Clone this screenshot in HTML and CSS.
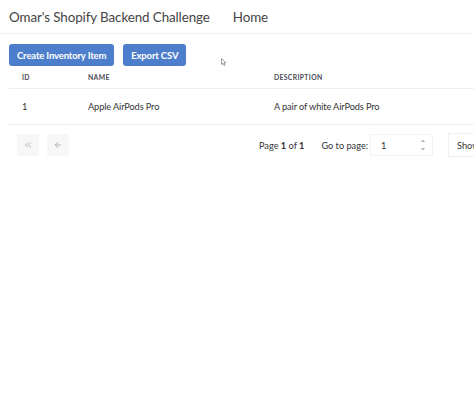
FILE: index.html
```html
<!DOCTYPE html>
<html>
<head>
<meta charset="utf-8">
<link rel="stylesheet" href="styles.css">
</head>
<body>
<header class="topbar">
  <span class="brand">Omar's Shopify Backend Challenge</span>
  <a class="nav-link">Home</a>
</header>
<main class="content">
  <div class="actions">
    <button class="btn">Create Inventory Item</button>
    <button class="btn">Export CSV</button>
    <span class="cursor"><svg width="6" height="8" viewBox="0 0 6 8"><path d="M0.5 0.5 L0.5 6.5 L2 5.2 L3 7.5 L4 7 L3 4.8 L5 4.8 Z" fill="#fff" stroke="#888" stroke-width="0.8"/></svg></span>
  </div>
  <table class="grid">
    <thead>
      <tr><th class="c-id">ID</th><th class="c-name">Name</th><th class="c-desc">Description</th></tr>
    </thead>
    <tbody>
      <tr><td>1</td><td>Apple AirPods Pro</td><td>A pair of white AirPods Pro</td></tr>
    </tbody>
  </table>
  <div class="pager">
    <div class="pager-nav">
      <button class="pbtn" aria-label="First page"><svg width="8" height="8" viewBox="0 0 8 8"><path d="M4 1.5 L1.5 4 L4 6.5 M7 1.5 L4.5 4 L7 6.5" fill="none" stroke="#aaa" stroke-width="0.9"/></svg></button>
      <button class="pbtn" aria-label="Previous page"><svg width="8" height="8" viewBox="0 0 8 8"><path d="M4 1.2 L1.2 4 L4 6.8 M1.2 4 H7" fill="none" stroke="#aaa" stroke-width="0.9"/></svg></button>
    </div>
    <div class="pager-info">
      <span>Page <b>1</b> of <b>1</b></span>
      <span class="goto">Go to page:</span>
      <div class="num">
        <span>1</span>
        <span class="spin"><svg width="6" height="14" viewBox="0 0 6 14"><path d="M0.8 4 L3 1.5 L5.2 4 Z" fill="#b5b5b5"/><path d="M0.8 10 L3 12.5 L5.2 10 Z" fill="#b5b5b5"/></svg></span>
      </div>
      <div class="show">Show 10</div>
    </div>
  </div>
</main>
</body>
</html>
```
FILE: styles.css
```css
html, body { margin: 0; padding: 0; background: #fff; }
body {
  font-family: Lato, "Noto Sans", sans-serif;
  color: #333;
  width: 474px;
  overflow: hidden;
}
.topbar {
  display: flex;
  align-items: center;
  height: 34px;
  padding: 1px 9px 0;
  box-sizing: border-box;
  border-bottom: 1px solid #f2f2f2;
  gap: 23px;
  font-size: 13.4px;
  letter-spacing: -0.1px;
  color: #444;
}
.nav-link { color: #444; }
.content { padding: 10px 0 0 9px; }
.actions {
  display: flex;
  align-items: flex-start;
  gap: 9px;
  height: 22px;
}
.btn {
  font-family: inherit;
  font-size: 9.5px;
  letter-spacing: -0.15px;
  font-weight: 700;
  color: #fff;
  background: #4d7ecb;
  border: none;
  border-radius: 3px;
  height: 22px;
  padding: 0 8px;
}
.cursor { margin-left: 26px; margin-top: 14px; line-height: 0; }
.grid {
  border-collapse: collapse;
  width: 520px;
  margin-top: 0;
}
.grid th {
  text-align: left;
  font-size: 6.8px;
  font-weight: 700;
  letter-spacing: 0.35px;
  text-transform: uppercase;
  color: #4a4a55;
  height: 22px;
  padding: 0 0 0 13px;
  border-bottom: 1px solid #eeeeee;
}
.grid td {
  font-size: 9.2px;
  letter-spacing: -0.1px;
  color: #333;
  height: 35px;
  padding: 0 0 0 13px;
  border-bottom: 1px solid #eeeeee;
}
.grid .c-id { width: 53px; }
.grid .c-name { width: 173px; }
.pager {
  display: flex;
  align-items: center;
  height: 40px;
  padding-left: 8px;
  width: 560px;
}
.pager-nav { display: flex; gap: 8px; }
.pbtn {
  width: 22px;
  height: 22px;
  border: none;
  background: #f7f7f8;
  border-radius: 2px;
  padding: 0;
  display: flex;
  align-items: center;
  justify-content: center;
}
.pager-info {
  display: flex;
  align-items: center;
  margin-left: 190px;
  font-size: 9.2px;
  color: #333;
}
.pager-info b { font-weight: 700; }
.goto { margin-left: 17px; }
.num {
  display: flex;
  align-items: center;
  justify-content: space-between;
  width: 63px;
  height: 22px;
  box-sizing: border-box;
  margin-left: 2px;
  padding: 0 6px 0 10px;
  border: 1px solid #f4f4f4;
}
.spin { line-height: 0; }
.show {
  margin-left: 15px;
  height: 22px;
  display: flex;
  align-items: center;
  padding-left: 8px;
  border: 1px solid #f0f0f0;
  width: 60px;
}
```
